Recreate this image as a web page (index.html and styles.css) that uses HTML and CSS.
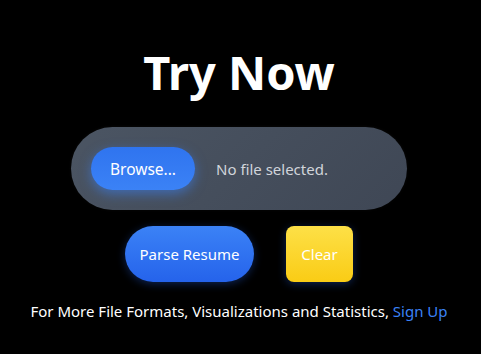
FILE: index.html
```html
<!DOCTYPE html>
<html lang="en">
<head>
<meta charset="utf-8">
<title>Try Now</title>
<link rel="stylesheet" href="styles.css">
</head>
<body>
<main class="page">
  <h1 class="title">Try Now</h1>
  <div class="file-box">
    <span class="browse">Browse...</span>
    <span class="file-name">No file selected.</span>
  </div>
  <div class="actions">
    <button class="btn-parse">Parse Resume</button>
    <button class="btn-clear">Clear</button>
  </div>
  <p class="footer">For More File Formats, Visualizations and Statistics, <a class="signup" href="#">Sign Up</a></p>
</main>
</body>
</html>
```

FILE: styles.css
```css
html, body {
  margin: 0;
  padding: 0;
  background: #000;
  font-family: "Noto Sans", "Open Sans", sans-serif;
  color: #fff;
}
.page {
  width: 478px;
  height: 354px;
  display: flex;
  flex-direction: column;
  align-items: center;
  box-sizing: border-box;
  padding-top: 40px;
}
.title {
  margin: 0;
  font-size: 47px;
  font-weight: 700;
  line-height: 64px;
  letter-spacing: 0;
}
.file-box {
  margin-top: 23px;
  width: 336px;
  height: 83px;
  box-sizing: border-box;
  padding: 20px;
  border-radius: 42px;
  background: linear-gradient(135deg, #4b5563 0%, #3f4755 100%);
  box-shadow: 0 6px 14px rgba(0, 0, 0, 0.6), 0 0 4px rgba(255,255,255,0.05);
  display: flex;
  align-items: center;
  gap: 21px;
}
.browse {
  width: 104px;
  height: 43px;
  border-radius: 22px;
  background: linear-gradient(180deg, #2f74ef 0%, #3b82f6 100%);
  box-shadow: 0 4px 12px rgba(59, 130, 246, 0.55);
  display: flex;
  align-items: center;
  justify-content: center;
  font-size: 15.5px;
  color: #fff;
}
.file-name {
  font-size: 15px;
  color: #d1d5db;
}
.actions {
  margin-top: 16px;
  display: flex;
  gap: 32px;
}
.btn-parse {
  width: 129px;
  height: 56px;
  border: none;
  border-radius: 28px;
  background: linear-gradient(180deg, #3b82f6 0%, #2563eb 100%);
  box-shadow: 0 2px 8px rgba(37, 99, 235, 0.35);
  color: #fff;
  font-family: inherit;
  font-size: 15px;
  padding: 0;
}
.btn-clear {
  width: 67px;
  height: 56px;
  border: none;
  border-radius: 8px;
  background: linear-gradient(180deg, #fde047 0%, #facc15 100%);
  box-shadow: 0 2px 8px rgba(37, 99, 235, 0.35);
  color: #fff;
  font-family: inherit;
  font-size: 15px;
  padding: 0;
}
.footer {
  margin: 19px 0 0;
  font-size: 15px;
  line-height: 20px;
}
.signup {
  color: #3b82f6;
  text-decoration: none;
}
```
